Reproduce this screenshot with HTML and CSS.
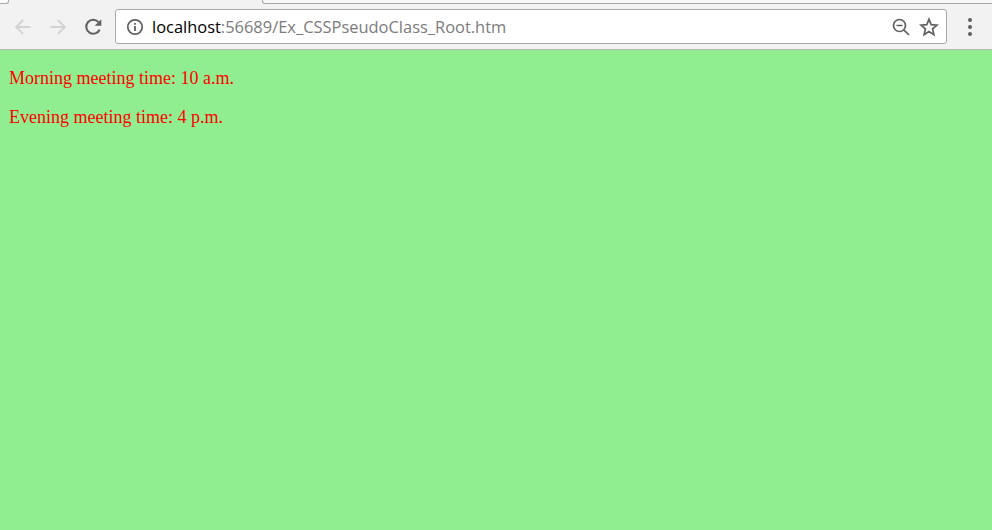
FILE: index.html
```html
<!DOCTYPE html>
<html lang="en">
  <head>
    <meta charset="UTF-8" />
    <meta name="viewport" content="width=device-width, initial-scale=1.0" />
    <title>Ex_CSSPseudoClass_Root</title>
    <link rel="stylesheet" href="styles.css">
  </head>

  <body>
    <div class="browser">
      <div class="tab-strip">
        <div class="tab-active"></div>
        <div class="tab-next"></div>
      </div>
      <div class="toolbar">
        <svg class="nav-icon" width="20" height="20" viewBox="0 0 20 20">
          <path d="M17.5 10H3.5M10 3.2L3.2 10L10 16.8" fill="none" stroke="#d3d3d3" stroke-width="2" />
        </svg>
        <svg class="nav-icon" width="20" height="20" viewBox="0 0 20 20">
          <path d="M2.5 10H16.5M10 3.2L16.8 10L10 16.8" fill="none" stroke="#d3d3d3" stroke-width="2" />
        </svg>
        <svg class="nav-icon" width="20" height="20" viewBox="0 0 20 20">
          <path d="M16.7 12.5A7 7 0 1 1 15.5 5.1" fill="none" stroke="#5f5f5f" stroke-width="2" />
          <path d="M18.3 2.2V8.8H11.7Z" fill="#5f5f5f" />
        </svg>
        <div class="address-bar">
          <svg class="info-icon" width="18" height="18" viewBox="0 0 18 18">
            <circle cx="9" cy="9" r="7.2" fill="none" stroke="#5f5f5f" stroke-width="1.7" />
            <path d="M9 8V13M9 5V6.7" fill="none" stroke="#5f5f5f" stroke-width="1.8" />
          </svg>
          <div class="url"><span class="url-host">localhost</span>:56689/Ex_CSSPseudoClass_Root.htm</div>
          <svg class="zoom-icon" width="18" height="18" viewBox="0 0 18 18">
            <circle cx="7.5" cy="7.5" r="6" fill="none" stroke="#5f5f5f" stroke-width="1.7" />
            <path d="M4.5 7.5H10.5M11.8 11.8L17 17" fill="none" stroke="#5f5f5f" stroke-width="1.7" />
          </svg>
          <svg class="star-icon" width="20" height="20" viewBox="0 0 20 20">
            <path d="M10 2.3L12.2 7.6L18 8.1L13.6 11.9L14.9 17.6L10 14.6L5.1 17.6L6.4 11.9L2 8.1L7.8 7.6Z" fill="none" stroke="#5f5f5f" stroke-width="1.7" />
          </svg>
        </div>
        <div class="menu-dots">
          <span></span>
          <span></span>
          <span></span>
        </div>
      </div>
    </div>

    <div class="content">
      <p>Morning meeting time: 10 a.m.</p>
      <p>Evening meeting time: 4 p.m.</p>
    </div>
  </body>
</html>
```

FILE: styles.css
```css
html,
body {
  height: 100%;
}

body {
  margin: 0;
  display: flex;
  flex-direction: column;
  overflow: hidden;
  background-color: #90ee90;
}

.browser {
  background-color: #f2f2f2;
  border-bottom: 1px solid #b8b8b8;
}

.tab-strip {
  display: flex;
  justify-content: space-between;
  height: 4px;
}

.tab-active {
  width: 8px;
  height: 3px;
  background-color: #fff;
  border-right: 1px solid #a8a8a8;
  border-bottom: 1px solid #a8a8a8;
  border-bottom-right-radius: 3px;
}

.tab-next {
  width: 729px;
  height: 3px;
  background-color: #f7f7f7;
  border-left: 1px solid #a8a8a8;
  border-bottom: 1px solid #a8a8a8;
  border-bottom-left-radius: 3px;
}

.toolbar {
  display: flex;
  align-items: center;
  height: 45px;
  padding-left: 13px;
}

.nav-icon {
  margin-right: 15px;
  flex-shrink: 0;
}

.nav-icon:nth-child(3) {
  margin-right: 12px;
}

.address-bar {
  display: flex;
  align-items: center;
  box-sizing: border-box;
  width: 832px;
  height: 35px;
  padding: 0 7px 0 10px;
  background-color: #fff;
  border: 1px solid #a9a9a9;
  border-radius: 3px;
}

.info-icon {
  flex-shrink: 0;
}

.url {
  flex: 1;
  margin-left: 8px;
  font: 16.45px "Open Sans", sans-serif;
  color: #7b7b7b;
  white-space: nowrap;
}

.url-host {
  color: #000;
}

.zoom-icon {
  margin-right: 9px;
}

.menu-dots {
  display: flex;
  flex-direction: column;
  gap: 3px;
  margin-left: 21px;
}

.menu-dots span {
  width: 4px;
  height: 4px;
  background-color: #5f5f5f;
  border-radius: 50%;
}

.content {
  flex: 1;
  padding: 0 9px;
}

p {
  margin: 18px 0;
  font: 18px "Liberation Serif", serif;
  color: red;
}
```
